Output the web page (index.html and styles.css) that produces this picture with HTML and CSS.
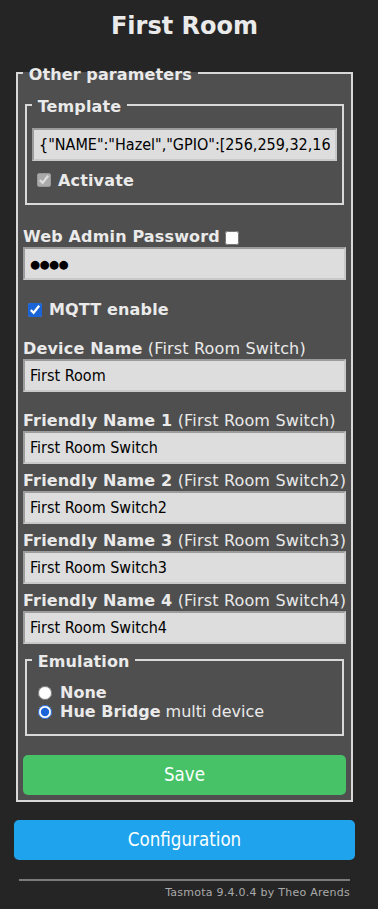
FILE: index.html
```html
<!DOCTYPE html>
<html lang="en">
<head>
<meta charset="utf-8">
<title>First Room - Other parameters</title>
<link rel="stylesheet" href="styles.css">
</head>
<body>
<div class="page">
  <h1 class="title">First Room</h1>
  <fieldset class="fs outer">
    <legend class="lg">&nbsp;Other parameters&nbsp;</legend>
    <div class="col">
      <fieldset class="fs inner tpl">
        <legend class="lg">&nbsp;Template&nbsp;</legend>
        <div class="col">
          <input class="in" type="text" value='{"NAME":"Hazel","GPIO":[256,259,32,163,289,224,0,0,320,0,0,0,0,0],"FLAG":0,"BASE":18}'>
          <label class="chkrow act"><input class="cb" type="checkbox" checked disabled><b>Activate</b></label>
        </div>
      </fieldset>
      <label class="pwrow"><b>Web Admin Password</b><input class="cb cb-pw" type="checkbox"></label>
      <input class="in pw" type="text" value="●●●●" aria-label="Web Admin Password">
      <label class="chkrow mqtt"><input class="cb" type="checkbox" checked><b>MQTT enable</b></label>
      <div class="lab first"><b>Device Name</b> (First Room Switch)</div>
      <input class="in" type="text" value="First Room">
      <div class="lab gap1"><b>Friendly Name 1</b> (First Room Switch)</div>
      <input class="in" type="text" value="First Room Switch">
      <div class="lab"><b>Friendly Name 2</b> (First Room Switch2)</div>
      <input class="in" type="text" value="First Room Switch2">
      <div class="lab"><b>Friendly Name 3</b> (First Room Switch3)</div>
      <input class="in" type="text" value="First Room Switch3">
      <div class="lab"><b>Friendly Name 4</b> (First Room Switch4)</div>
      <input class="in" type="text" value="First Room Switch4">
      <fieldset class="fs inner emu">
        <legend class="lg">&nbsp;Emulation&nbsp;</legend>
        <div class="col radios">
          <label class="radrow"><input class="rd" type="radio" name="b2"><b>None</b></label>
          <label class="radrow"><input class="rd" type="radio" name="b2" checked><b>Hue Bridge</b>&nbsp;multi device</label>
        </div>
      </fieldset>
      <button class="btn green" type="button">Save</button>
    </div>
  </fieldset>
  <button class="btn blue cfg" type="button">Configuration</button>
  <div class="foot">
    <div class="rule"></div>
    <div class="foot-text">Tasmota 9.4.0.4 by Theo Arends</div>
  </div>
</div>
</body>
</html>
```

FILE: styles.css
```css
* {
  box-sizing: border-box;
}

body {
  margin: 0;
  background: #252525;
  font-family: "DejaVu Sans", Verdana, sans-serif;
  color: #eaeaea;
}

.page {
  width: 341px;
  margin-left: 14px;
  display: flex;
  flex-direction: column;
}

.title {
  margin: 12px 0 0;
  font-size: 24px;
  line-height: 28px;
  font-weight: bold;
  text-align: center;
  color: #eaeaea;
}

.fs {
  margin: 0 2px;
  padding: 0 5px;
  border: 2px solid #d9d9d9;
  background: #4f4f4f;
  min-width: 0;
}

.outer {
  margin-top: 22px;
  padding-top: 10px;
  padding-bottom: 5px;
}

.lg {
  padding: 3px 0 0;
  font-size: 16px;
  line-height: 19px;
  font-weight: bold;
  letter-spacing: 0.12px;
  color: #eaeaea;
}

.col {
  display: flex;
  flex-direction: column;
}

.tpl {
  padding-top: 12px;
  padding-bottom: 13px;
}

.in {
  display: block;
  width: 100%;
  height: 33px;
  margin: 0;
  padding: 5px;
  border-width: 2px;
  border-style: solid;
  border-color: #9c9c9c #c9c9c9 #c9c9c9 #9c9c9c;
  background: #dddddd;
  color: #000000;
  font-family: "DejaVu Sans Condensed", "DejaVu Sans", sans-serif;
  font-stretch: condensed;
  font-size: 16px;
  line-height: 19px;
  outline: none;
}

.pw {
  font-family: "DejaVu Sans", sans-serif;
  font-stretch: normal;
  font-size: 11.5px;
  letter-spacing: -0.5px;
}

.chkrow,
.pwrow,
.radrow {
  display: flex;
  align-items: center;
  font-size: 16px;
  color: #eaeaea;
  white-space: nowrap;
}

.chkrow,
.pwrow {
  letter-spacing: 0.15px;
}

.chkrow {
  height: 20px;
}

.act {
  margin-top: 9px;
}

.act .cb {
  margin: 0 7px 0 5px;
}

.cb,
.rd {
  width: 14px;
  height: 14px;
  flex: none;
  accent-color: #1a64d8;
}

.pwrow {
  margin-top: 21px;
  height: 21px;
}

.cb-pw {
  margin: 2px 0 0 5px;
}

.mqtt {
  margin-top: 19px;
}

.mqtt .cb {
  margin: 1px 7px 0 5px;
}

.lab {
  margin-top: 7px;
  height: 20px;
  line-height: 20px;
  font-size: 16px;
  letter-spacing: 0.17px;
  white-space: nowrap;
  color: #eaeaea;
}

.lab.first {
  margin-top: 20px;
}

.lab.gap1 {
  margin-top: 19px;
}

.emu {
  margin-top: 5px;
  padding-top: 12px;
  padding-bottom: 13px;
}

.radrow {
  height: 19px;
}

.rd {
  margin: 0 8px 0 6px;
}

.btn {
  display: block;
  width: 100%;
  height: 40px;
  border: 0;
  border-radius: 5px;
  color: #faffff;
  font-family: "DejaVu Sans Condensed", "DejaVu Sans", sans-serif;
  font-stretch: condensed;
  font-size: 18.6px;
  line-height: 40px;
  padding: 0;
}

.green {
  margin-top: 19px;
  background: #47c266;
}

.blue {
  background: #1fa3ec;
}

.cfg {
  margin-top: 18px;
}

.rule {
  margin: 19px 5px 0;
  height: 2px;
  background: #7b7b7b;
}

.foot-text {
  margin: 5px 5px 0 0;
  text-align: right;
  font-size: 11px;
  line-height: 13px;
  letter-spacing: 0.25px;
  color: #aaaaaa;
}
```
